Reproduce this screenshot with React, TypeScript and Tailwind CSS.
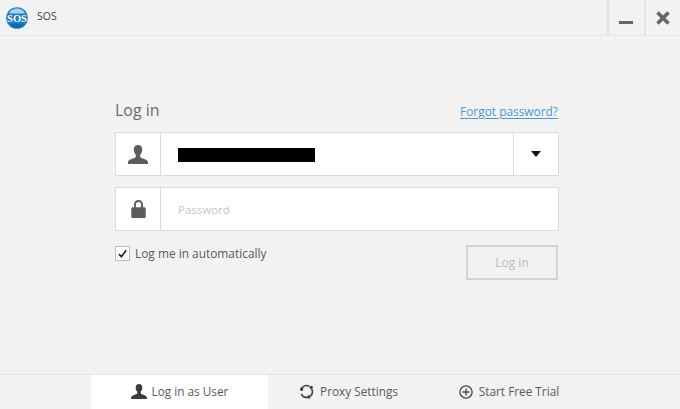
const font = "font-['Open_Sans','Noto_Sans',sans-serif]";

function UserIcon({ className }: { className: string }) {
  return (
    <svg viewBox="0 0 20 19" className={className} fill="currentColor">
      <path d="M10 0c2.800 0 4.200 1.800 4.200 4.400 0 2.200-.8 4.100-2 5.300v1.800c0 1 1.200 1.500 3 2.100 2.500.9 4.300 1.500 4.800 3.400v2H0v-2c.5-1.900 2.300-2.500 4.800-3.400 1.800-.6 3-1.100 3-2.100V9.700c-1.200-1.200-2-3.100-2-5.300C5.800 1.800 7.200 0 10 0z" />
    </svg>
  );
}

function Logo() {
  return (
    <svg viewBox="0 0 22 22" className="h-[22px] w-[22px] overflow-visible">
      <circle cx="11" cy="11" r="10.800" fill="#1a7cc1" />
      <path d="M3 6.500C4.500 3 7.500 1.500 11 1.500s6.500 1.500 8 5z" fill="#a9d3ec" />
      <path d="M3.500 17c1.800 2.500 4.500 4 7.500 4s5.700-1.500 7.500-4z" fill="#0e6aae" />
      <text x="11" y="15" textAnchor="middle" fontSize="10.500" fontWeight="700" fill="#fff" fontFamily="Liberation Serif, serif">SOS</text>
    </svg>
  );
}

export default function App() {
  return (
    <div className={`${font} flex h-[409px] w-[680px] flex-col overflow-hidden bg-[#f2f2f2] text-[#5a5a5a]`}>
      {/* title bar */}
      <header className="flex h-9 shrink-0 items-stretch border-b border-[#e6e6e6]">
        <div className="flex flex-1 items-center gap-[9px] pl-[6px]">
          <Logo />
          <span className="mb-[2px] text-[10.5px] text-[#444]">SOS</span>
        </div>
        <div className="flex w-[37px] items-center pl-[10px] pt-[10px] border-l-2 border-[#e4e4e4]">
          <span className="block h-[3px] w-[14px] bg-[#666]" />
        </div>
        <div className="flex w-[36px] items-center justify-center border-l-2 border-[#e4e4e4]">
          <svg viewBox="0 0 14 14" className="h-[14px] w-[14px]" stroke="#666" strokeWidth="3.600" fill="none">
            <path d="M1.500 1.500l11 11M12.500 1.500l-11 11" />
          </svg>
        </div>
      </header>

      {/* login form */}
      <main className="flex flex-1 flex-col pl-[115px] pr-[121px] pt-[64px]">
        <div className="flex h-[22px] items-center justify-between">
          <h1 className="mb-[3px] text-[16px] leading-none text-[#6a6a6a]">Log in</h1>
          <a className="pr-[1px] pt-[1px] text-[11.9px] text-[#4a9ad8] underline underline-offset-2">Forgot password?</a>
        </div>

        <div className="mt-[10px] flex h-[44px] border border-[#dcdcdc] bg-white">
          <div className="flex w-[45px] items-center justify-center border-r border-[#dcdcdc]">
            <UserIcon className="h-[19px] w-[20px] text-[#5c5c5c]" />
          </div>
          <div className="flex flex-1 items-center pl-[17px] pt-[2px]">
            <div className="h-[14px] w-[137px] bg-black" />
          </div>
          <div className="flex w-[45px] items-center justify-center border-l border-[#dcdcdc]">
            <svg viewBox="0 0 10 6" className="h-[6px] w-[10px]">
              <path d="M0 0h10L5 6z" fill="#111" />
            </svg>
          </div>
        </div>

        <div className="mt-[11px] flex h-[44px] border border-[#dcdcdc] bg-white">
          <div className="flex w-[45px] items-center justify-center border-r border-[#dcdcdc]">
            <svg viewBox="0 0 16 20" className="h-[18px] w-[15px] text-[#5c5c5c]" fill="currentColor">
              <path fillRule="evenodd" d="M8 0c3 0 5 2.200 5 5.200V8h1.500c.8 0 1.500.7 1.500 1.500v9c0 .8-.7 1.500-1.500 1.500h-13C.7 20 0 19.300 0 18.500v-9C0 8.700.7 8 1.500 8H3V5.200C3 2.200 5 0 8 0zm0 2.200c-1.700 0-2.900 1.300-2.900 3V8h5.800V5.200c0-1.700-1.200-3-2.900-3z" />
            </svg>
          </div>
          <div className="flex flex-1 items-center pl-[17px] pt-[2px] text-[11.5px] text-[#c8c8c8]">Password</div>
        </div>

        <div className="mt-[14px] flex items-start justify-between">
          <label className="mt-[1px] flex items-center gap-[5px]">
            <span className="flex h-[15px] w-[15px] items-center justify-center border border-[#bdbdbd] bg-white">
              <svg viewBox="0 0 12 12" className="h-[11px] w-[11px]" fill="none" stroke="#222" strokeWidth="1.800">
                <path d="M2 6.500l2.800 3L10 2.500" />
              </svg>
            </span>
            <span className="text-[11.9px] leading-[15px]">Log me in automatically</span>
          </label>
          <button className="mr-[1px] flex h-[35px] w-[92px] items-center justify-center border-2 border-[#d4d4d4] pt-[1px] text-[12px] text-[#bcbcbc]">
            Log in
          </button>
        </div>
      </main>

      {/* bottom tabs */}
      <nav className="flex h-[35px] shrink-0 border-t border-[#e4e4e4] pl-[91px] text-[11.8px]">
        <div className="flex w-[177px] items-center justify-center gap-[5px] bg-white pb-[1px]">
          <UserIcon className="h-[15px] w-[16px] text-[#3c3c3c]" />
          <span>Log in as User</span>
        </div>
        <div className="flex w-[161px] items-center justify-center gap-[6px] pb-[1px]">
          <svg viewBox="0 0 16 16" className="h-[15px] w-[15px]" fill="none" stroke="#444" strokeWidth="1.700">
            <path d="M3 4.500A6 6 0 0 1 11 2.500M13.500 5.500A6 6 0 0 1 12 13M9.500 14A6 6 0 0 1 2.500 10.500" />
            <circle cx="2.800" cy="5.500" r="1" fill="#444" />
            <circle cx="13" cy="3.800" r="1" fill="#444" />
            <circle cx="10.500" cy="13.800" r="1" fill="#444" />
          </svg>
          <span>Proxy Settings</span>
        </div>
        <div className="flex w-[160px] items-center justify-center gap-[6px] pb-[1px]">
          <svg viewBox="0 0 16 16" className="h-[14px] w-[14px]" fill="none" stroke="#444" strokeWidth="1.500">
            <circle cx="8" cy="8" r="7" />
            <path d="M8 4v8M4 8h8" />
          </svg>
          <span>Start Free Trial</span>
        </div>
      </nav>
    </div>
  );
}
